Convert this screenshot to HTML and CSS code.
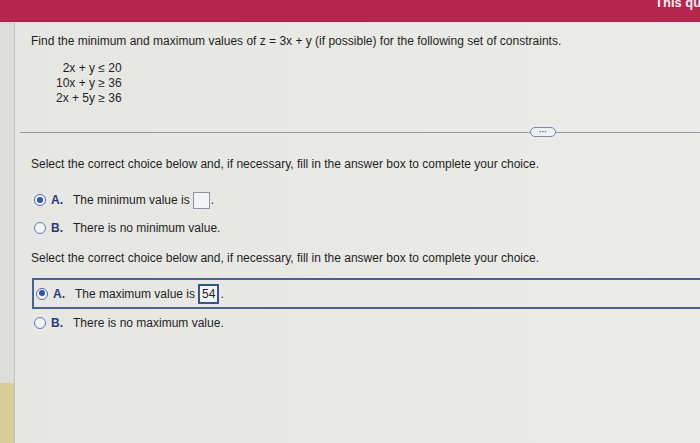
FILE: index.html
```html
<!DOCTYPE html>
<html>
<head>
<meta charset="utf-8">
<link rel="stylesheet" href="styles.css">
</head>
<body>
<div class="header"><span class="hdr-text">This question</span></div>
<div class="main">
  <div class="strip"><div class="strip-yellow"></div></div>
  <div class="content">
    <p class="question">Find the minimum and maximum values of z = 3x + y (if possible) for the following set of constraints.</p>
    <div class="constraints">
      <div>2x + y ≤ 20</div>
      <div>10x + y ≥ 36</div>
      <div>2x + 5y ≥ 36</div>
    </div>
    <div class="divider">
      <div class="line line-left"></div>
      <div class="pill">···</div>
      <div class="line line-right"></div>
    </div>
    <p class="prompt prompt-1">Select the correct choice below and, if necessary, fill in the answer box to complete your choice.</p>
    <div class="option opt-first">
      <span class="radio selected"></span><span class="label">A.</span><span class="otext">The minimum value is</span><span class="abox empty"></span><span class="dot">.</span>
    </div>
    <div class="option">
      <span class="radio"></span><span class="label">B.</span><span class="otext">There is no minimum value.</span>
    </div>
    <p class="prompt prompt-2">Select the correct choice below and, if necessary, fill in the answer box to complete your choice.</p>
    <div class="option highlighted">
      <span class="radio selected"></span><span class="label">A.</span><span class="otext">The maximum value is</span><span class="abox filled">54</span><span class="dot">.</span>
    </div>
    <div class="option opt-last">
      <span class="radio"></span><span class="label">B.</span><span class="otext">There is no maximum value.</span>
    </div>
  </div>
</div>
</body>
</html>
```
FILE: styles.css
```css
* { box-sizing: border-box; }
html, body {
  margin: 0;
  padding: 0;
  width: 700px;
  height: 443px;
  overflow: hidden;
  font-family: "Liberation Sans", Arial, sans-serif;
  color: #1f1f1f;
  background: #e7e7e4;
}
.header {
  height: 22px;
  background: #b8264f;
  display: flex;
  justify-content: flex-start;
  overflow: hidden;
  border-bottom: 1px solid #a7254a;
}
.hdr-text {
  margin-left: 655px;
  margin-top: -5px;
  color: #f4f0f2;
  font-weight: bold;
  font-size: 13px;
  line-height: 15px;
  white-space: nowrap;
}
.main {
  display: flex;
  height: 421px;
}
.strip {
  width: 15px;
  background: #dcddd9;
  border-right: 1px solid #c2c3bf;
  display: flex;
  flex-direction: column;
}
.strip-yellow {
  margin-top: auto;
  height: 60px;
  background: #d7ce97;
}
.content {
  flex: 1;
  padding: 11px 0 0 16px;
  background: linear-gradient(90deg, #e6e6e3 0%, #e9e9e6 60%, #ebebe9 100%);
}
.question {
  margin: 0;
  font-size: 12px;
  line-height: 16px;
}
.constraints {
  display: inline-block;
  margin: 12px 0 0 25px;
  text-align: right;
  font-size: 12px;
  line-height: 15px;
}
.divider {
  display: flex;
  align-items: center;
  margin: 21px 0 0 -11px;
}
.line {
  height: 1px;
  background: #9a9b9a;
}
.line-left { width: 510px; }
.line-right { flex: 1; }
.pill {
  width: 26px;
  height: 10px;
  border: 1px solid #7d8a9c;
  border-radius: 5px;
  background: #eef0f2;
  font-size: 8px;
  line-height: 7px;
  text-align: center;
  color: #3b4a66;
  font-weight: bold;
}
.prompt {
  margin: 0;
  font-size: 12px;
  line-height: 16px;
}
.prompt-1 { margin-top: 19px; }
.prompt-2 { margin-top: 12px; }
.option {
  display: flex;
  align-items: center;
  font-size: 12px;
  height: 20px;
  padding-left: 3px;
}
.opt-first { margin-top: 18px; }
.opt-first + .option { margin-top: 8px; }
.radio {
  width: 12px;
  height: 12px;
  border-radius: 50%;
  border: 1.5px solid #5d78b8;
  background: #f3f4f6;
  margin-right: 5px;
  position: relative;
}
.radio.selected {
  border-color: #4a68c0;
}
.radio.selected::after {
  content: "";
  position: absolute;
  left: 1.5px;
  top: 1.5px;
  width: 6px;
  height: 6px;
  border-radius: 50%;
  background: #3551b0;
}
.label {
  font-weight: bold;
  color: #2b3a78;
  width: 22px;
}
.abox {
  display: inline-block;
  margin-left: 3px;
  height: 17px;
  background: #f2f3f4;
}
.abox.empty {
  width: 17px;
  border: 1px solid #8c95a6;
}
.abox.filled {
  height: 20px;
  padding: 0 2px;
  border: 2px solid #3a5488;
  line-height: 16px;
  font-size: 12px;
}
.dot { margin-left: 1px; }
.highlighted {
  margin-top: 12px;
  margin-left: 1px;
  height: 31px;
  border-top: 2px solid #46638f;
  border-bottom: 2px solid #46638f;
  border-left: 2px solid #46638f;
  padding-left: 2px;
}
.opt-last { margin-top: 4px; }
```
